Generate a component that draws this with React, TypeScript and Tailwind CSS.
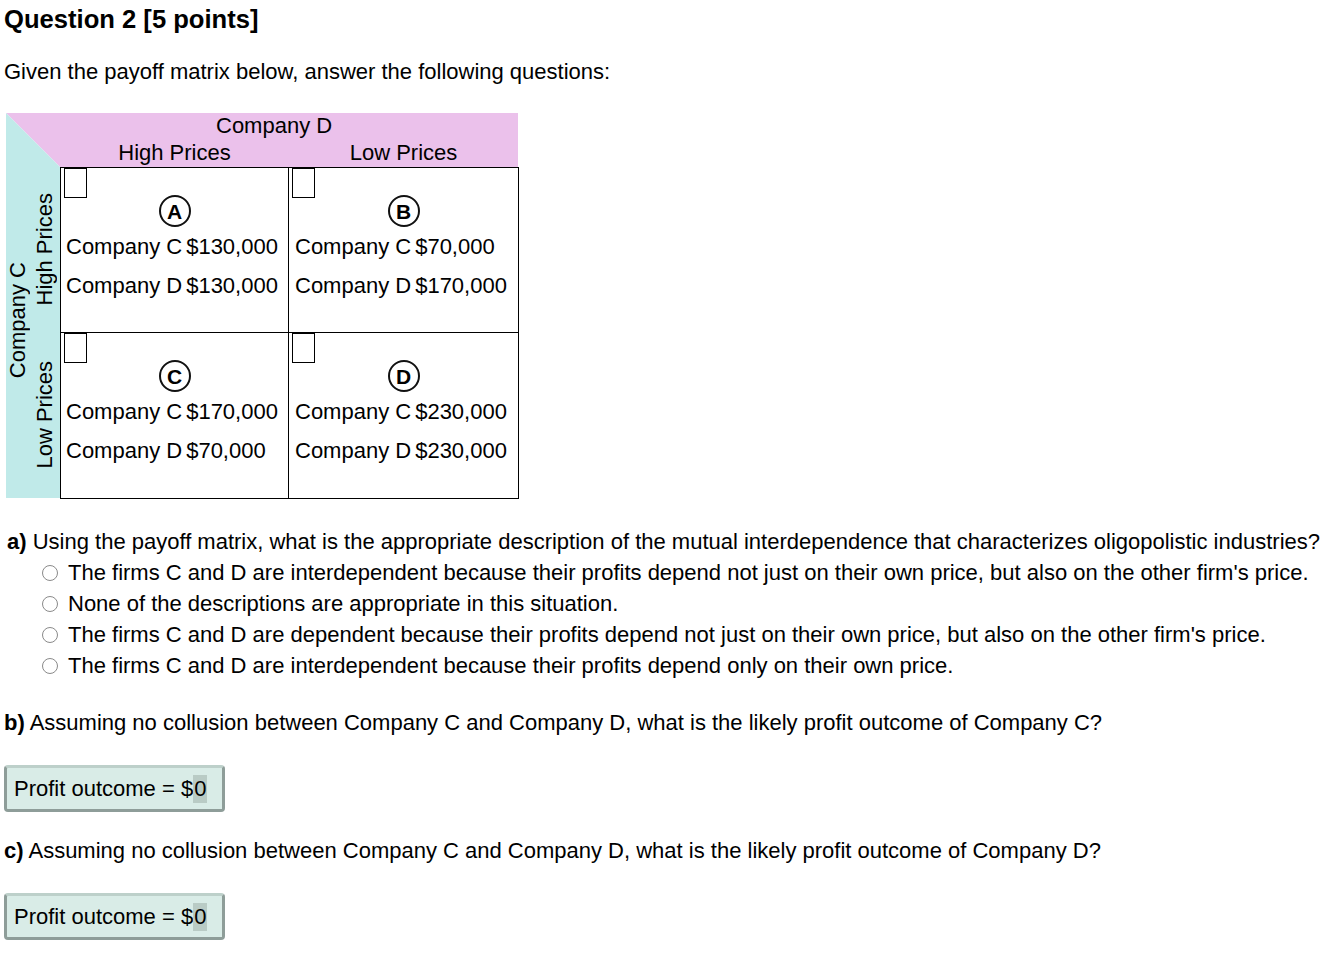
import React from "react";

function Circled({ letter }: { letter: string }) {
  return (
    <div className="mx-auto -mt-[3px] flex h-[32px] w-[32px] items-center justify-center rounded-full border-2 border-[#111] text-[21px] font-bold leading-none">
      {letter}
    </div>
  );
}

function Cell({
  letter,
  c,
  d,
  pl,
  h,
}: {
  letter: string;
  c: string;
  d: string;
  pl: string;
  h: string;
}) {
  return (
    <div className={`flex flex-col border-r border-b border-black ${h}`}>
      <div className="ml-[3px] h-[30px] w-[23px] border border-black" />
      <Circled letter={letter} />
      <div className={`mt-[0px] text-[22px] leading-[39px] ${pl}`}>
        <div>
          Company C<span className="ml-[4px]">{c}</span>
        </div>
        <div>
          Company D<span className="ml-[4px]">{d}</span>
        </div>
      </div>
    </div>
  );
}

function Matrix() {
  return (
    <div className="ml-[6px] mt-[28px] flex w-[513px] flex-col text-[22px]">
      <div className="flex h-[54px]">
        <svg width="54" height="54" viewBox="0 0 54 54" className="block shrink-0">
          <polygon points="0,0 54,0 54,54" fill="#ebc1eb" />
          <polygon points="0,0 0,54 54,54" fill="#c0eae9" />
        </svg>
        <div className="flex w-[458px] flex-col bg-[#ebc1eb] leading-[26px]">
          <div className="pl-[156px]">Company D</div>
          <div className="mt-[1px] grid grid-cols-[229px_229px]">
            <div className="text-center">High Prices</div>
            <div className="text-center">Low Prices</div>
          </div>
        </div>
      </div>
      <div className="flex">
        <div className="flex h-[331px] w-[54px] shrink-0 bg-[#c0eae9]">
          <div className="flex w-[24px] items-center justify-center pb-[25px]">
            <span className="rotate-180 whitespace-nowrap leading-[24px] [writing-mode:vertical-rl]">
              Company C
            </span>
          </div>
          <div className="flex w-[30px] flex-col pl-[3px]">
            <div className="flex h-[165px] items-center justify-start">
              <span className="rotate-180 whitespace-nowrap leading-[24px] [writing-mode:vertical-rl]">
                High Prices
              </span>
            </div>
            <div className="flex h-[166px] items-center justify-start">
              <span className="rotate-180 whitespace-nowrap leading-[24px] [writing-mode:vertical-rl]">
                Low Prices
              </span>
            </div>
          </div>
        </div>
        <div className="grid grid-cols-[228px_230px] border-t border-l border-black">
          <Cell letter="A" c="$130,000" d="$130,000" pl="pl-[5px]" h="h-[165px]" />
          <Cell letter="B" c="$70,000" d="$170,000" pl="pl-[6px]" h="h-[165px]" />
          <Cell letter="C" c="$170,000" d="$70,000" pl="pl-[5px]" h="h-[166px]" />
          <Cell letter="D" c="$230,000" d="$230,000" pl="pl-[6px]" h="h-[166px]" />
        </div>
      </div>
    </div>
  );
}

function Option({ text }: { text: string }) {
  return (
    <div className="flex h-[31px] items-center gap-[10px] pl-[42px]">
      <div className="h-[16px] w-[16px] shrink-0 rounded-full border border-[#8a8a8a] bg-white" />
      <span className="leading-[31px]">{text}</span>
    </div>
  );
}

function AnswerBox() {
  return (
    <div className="ml-[4px] inline-flex h-[47px] items-center rounded-[4px] border-[3px] border-[#8e9d99] border-t-[#bdd0ca] bg-[#d9ece7] pl-[7px] pr-[15px] text-[22px]">
      <span className="leading-[28px]">Profit outcome = $</span>
      <span className="bg-[#b9cbc5] px-[1px] leading-[28px]">0</span>
    </div>
  );
}

export default function App() {
  return (
    <div className="min-h-screen w-[1327px] bg-white font-['Liberation_Sans',Arial,sans-serif] text-black">
      <div className="pl-[4px] pt-[4px] text-[25.6px] font-bold leading-[30px]">Question 2 [5 points]</div>
      <div className="mt-[25px] pl-[4px] text-[22px] leading-[26px]">
        Given the payoff matrix below, answer the following questions:
      </div>
      <Matrix />
      <div className="mt-[28px] text-[22px]">
        <div className="pl-[7px] leading-[30px]">
          <b>a)</b> Using the payoff matrix, what is the appropriate description of the mutual interdependence that
          characterizes oligopolistic industries?
        </div>
        <Option text="The firms C and D are interdependent because their profits depend not just on their own price, but also on the other firm's price." />
        <Option text="None of the descriptions are appropriate in this situation." />
        <Option text="The firms C and D are dependent because their profits depend not just on their own price, but also on the other firm's price." />
        <Option text="The firms C and D are interdependent because their profits depend only on their own price." />
        <div className="mt-[29px] pl-[4px] leading-[26px]">
          <b>b)</b> Assuming no collusion between Company C and Company D, what is the likely profit outcome of Company C?
        </div>
        <div className="mt-[29px]">
          <AnswerBox />
        </div>
        <div className="mt-[26px] pl-[4px] leading-[26px]">
          <b>c)</b> Assuming no collusion between Company C and Company D, what is the likely profit outcome of Company D?
        </div>
        <div className="mt-[29px]">
          <AnswerBox />
        </div>
      </div>
    </div>
  );
}
